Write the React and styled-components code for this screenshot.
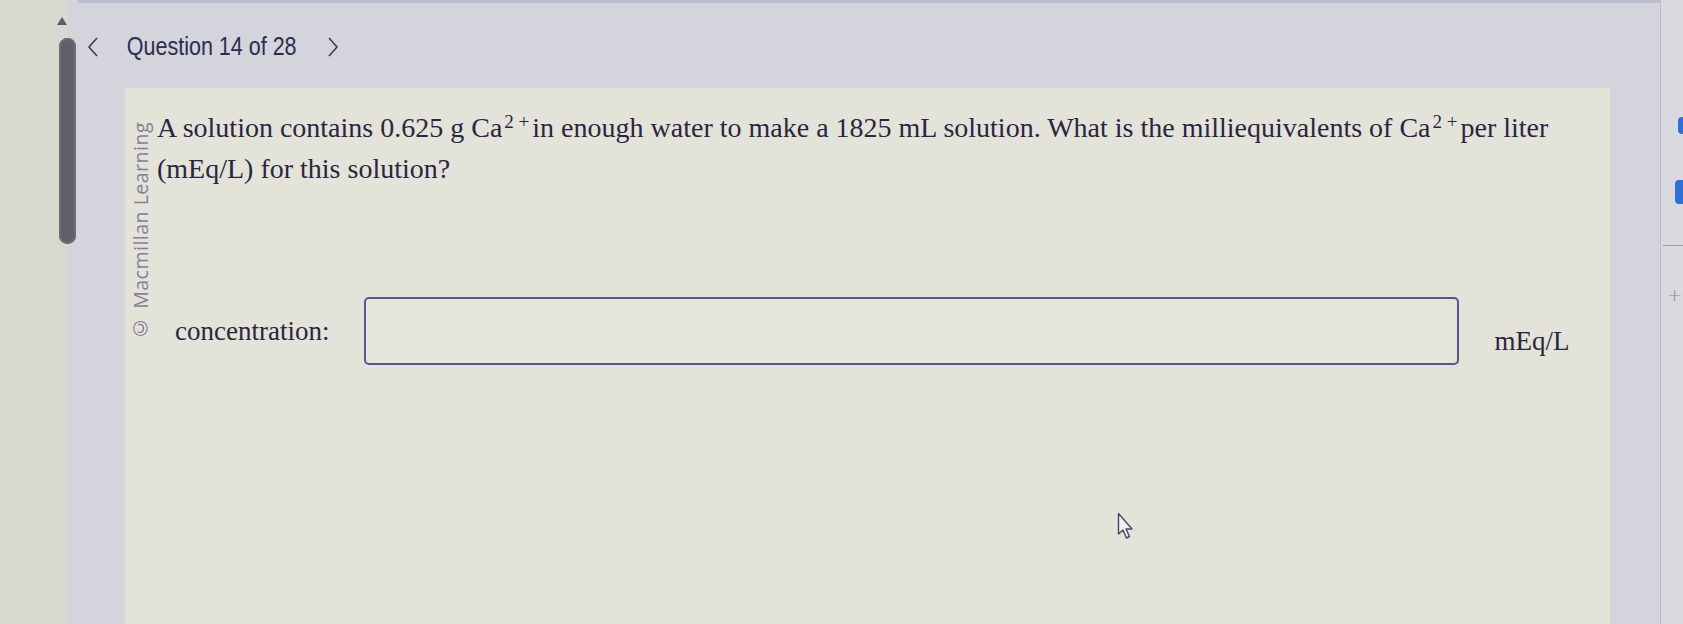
import React from "react";
import styled, { createGlobalStyle } from "styled-components";

const GlobalStyle = createGlobalStyle`
    html, body {
        margin: 0;
        padding: 0;
        height: 100%;
        overflow: hidden;
    }
    #root {
        height: 100%;
    }
`;

const Page = styled.div`
    display: flex;
    height: 100vh;
    background-color: #d3d4dc;
`;

const LeftStrip = styled.div`
    width: 56px;
    background-color: #d9d8cf;
`;

const Rail = styled.div`
    width: 22px;
    display: flex;
    flex-direction: column;
    align-items: center;
    padding-top: 17px;
    gap: 13px;
    background: linear-gradient(to right, #d9d8cf 0 12px, #d3d4dc 12px);
`;

const Arrow = styled.div`
    width: 0;
    height: 0;
    margin-left: -10px;
    border-left: 5px solid transparent;
    border-right: 5px solid transparent;
    border-bottom: 8px solid #5d5e68;
`;

const Thumb = styled.div`
    width: 17px;
    height: 206px;
    border-radius: 9px;
    background-color: #5f6069;
    box-shadow: inset 0 0 0 2px #6b6c75;
`;

const MainPane = styled.div`
    flex: 1;
    display: flex;
    flex-direction: column;
    border-top: 3px solid #bcbdcf;
`;

const Header = styled.div`
    height: 85px;
    display: flex;
    align-items: center;
    padding-left: 8px;
    padding-top: 2px;
    box-sizing: border-box;
`;

const NavButton = styled.button`
    border: none;
    background: none;
    padding: 0;
    width: 14px;
    height: 22px;
    display: flex;
    align-items: center;
    justify-content: center;
    color: #3b3d5c;
    cursor: pointer;
`;

const Title = styled.span`
    display: inline-block;
    margin: 0 16px 0 13px;
    font-family: "Liberation Sans", Arial, sans-serif;
    font-size: 25px;
    color: #2c2e4e;
    transform: scaleX(0.86);
`;

const ContentRow = styled.div`
    flex: 1;
    display: flex;
    padding-left: 47px;
    padding-right: 50px;
    min-height: 0;
`;

const Card = styled.div`
    position: relative;
    flex: 1;
    background-color: #e3e3d9;
    padding: 19px 0 0 32px;
    font-family: "Liberation Serif", "Times New Roman", serif;
    color: #2a2640;
`;

const Watermark = styled.div`
    position: absolute;
    left: 5px;
    top: 34px;
    width: 22px;
    writing-mode: vertical-rl;
    transform: rotate(180deg);
    font-family: "Open Sans", sans-serif;
    font-size: 19.5px;
    letter-spacing: 0.5px;
    color: #838293;
    white-space: nowrap;
    line-height: 22px;
`;

const Question = styled.p`
    margin: 0;
    font-size: 28px;
    line-height: 41px;
    width: 1420px;
`;

const Sup = styled.sup`
    display: inline-block;
    font-size: 0.68em;
    line-height: 1;
    vertical-align: 0.48em;
    margin: 0 3px 0 2px;
`;

const AnswerRow = styled.div`
    display: flex;
    align-items: center;
    margin-top: 108px;
    padding-left: 18px;
    font-size: 27px;
`;

const Label = styled.span`
    margin-top: 0;
`;

const AnswerBox = styled.input`
    width: 1095px;
    height: 68px;
    margin: 0 35px;
    box-sizing: border-box;
    border: 2px solid #57558c;
    border-radius: 5px;
    background-color: #e5e5dc;
    outline: none;
`;

const Unit = styled.span`
    margin-top: 20px;
`;

const Pointer = styled.svg`
    position: absolute;
    left: 992px;
    top: 424px;
`;

const Divider = styled.div`
    width: 1px;
    background-color: #bbbccb;
`;

const Sidebar = styled.div`
    width: 22px;
    display: flex;
    flex-direction: column;
    background-color: #d9dae0;
    padding-top: 117px;
`;

const BlueMark = styled.div`
    align-self: flex-end;
    width: ${(p) => p.w}px;
    height: ${(p) => p.h}px;
    margin-bottom: ${(p) => p.gap}px;
    background-color: #2f6fd6;
    border-radius: 4px 0 0 4px;
`;

const Rule = styled.div`
    height: 1px;
    margin-left: 2px;
    background-color: #9c9db0;
`;

const Plus = styled.div`
    margin: 38px 0 0 6px;
    font-family: "DejaVu Sans", sans-serif;
    font-size: 18px;
    font-weight: 200;
    color: #8a8b9a;
`;

function App() {
    return (
        <>
            <GlobalStyle />
            <Page>
                <LeftStrip />
                <Rail>
                    <Arrow />
                    <Thumb />
                </Rail>
                <MainPane>
                    <Header>
                        <NavButton aria-label="previous">
                            <svg width="12" height="20" viewBox="0 0 12 20">
                                <path d="M10 1 L2 10 L10 19" fill="none" stroke="currentColor" strokeWidth="1.6" />
                            </svg>
                        </NavButton>
                        <Title>Question 14 of 28</Title>
                        <NavButton aria-label="next">
                            <svg width="12" height="20" viewBox="0 0 12 20">
                                <path d="M2 1 L10 10 L2 19" fill="none" stroke="currentColor" strokeWidth="1.6" />
                            </svg>
                        </NavButton>
                    </Header>
                    <ContentRow>
                        <Card>
                            <Watermark>© Macmillan Learning</Watermark>
                            <Question>
                                A solution contains 0.625 g Ca<Sup>2 +</Sup>in enough water to make a 1825 mL
                                solution. What is the milliequivalents of Ca<Sup>2 +</Sup>per liter (mEq/L) for
                                this solution?
                            </Question>
                            <AnswerRow>
                                <Label>concentration:</Label>
                                <AnswerBox type="text" aria-label="concentration" />
                                <Unit>mEq/L</Unit>
                            </AnswerRow>
                            <Pointer width="18" height="30" viewBox="0 0 18 30">
                                <path
                                    d="M1.5 1.5 L1.5 22 L6 18 L9.5 26 L12.5 24.5 L9 17 L15 17 Z"
                                    fill="#f1f1ec"
                                    stroke="#4a4770"
                                    strokeWidth="1.4"
                                    strokeLinejoin="round"
                                />
                            </Pointer>
                        </Card>
                    </ContentRow>
                </MainPane>
                <Divider />
                <Sidebar>
                    <BlueMark w={5} h={17} gap={46} />
                    <BlueMark w={8} h={24} gap={41} />
                    <Rule />
                    <Plus>+</Plus>
                </Sidebar>
            </Page>
        </>
    );
}

export default App;
